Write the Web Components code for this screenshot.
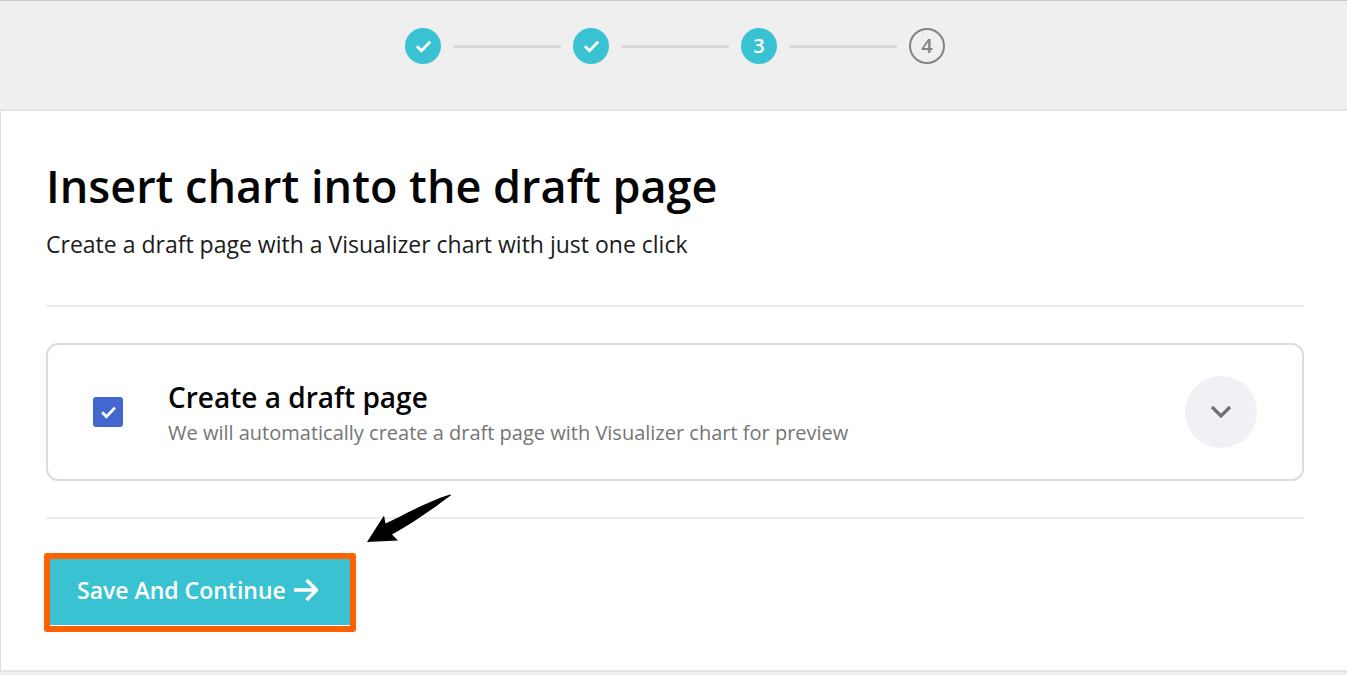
<!DOCTYPE html>
<html lang="en">
<head>
<meta charset="utf-8">
<meta name="viewport" content="width=device-width, initial-scale=1">
<title>Insert chart</title>
<style>
  body { margin: 0; background: #efefef; color: #050505; font-family: "Open Sans", "Noto Sans", sans-serif; }
</style>
</head>
<body>
<setup-wizard>
  <wizard-steps slot="steps" current="3" total="4"></wizard-steps>
  <wizard-heading>
    Insert chart into the draft page
    <span slot="lead">Create a draft page with a Visualizer chart with just one click</span>
  </wizard-heading>
  <option-card>
    Create a draft page
    <span slot="description">We will automatically create a draft page with Visualizer chart for preview</span>
  </option-card>
  <action-button slot="actions">Save And Continue</action-button>
</setup-wizard>

<script>
class BaseElement extends HTMLElement {
  connectedCallback() {
    if (this.shadowRoot) return;
    this.attachShadow({ mode: "open" }).innerHTML = this.render();
  }
}

customElements.define("setup-wizard", class extends BaseElement {
  render() {
    return `
      <style>
        :host { display: block; border-top: 1px solid #c8c8c8; }
        header { padding: 27px 0 45px 3px; }
        main { border: solid #dcdcdc; border-width: 2px 0 2px 1px; border-top-color: #e4e4e4; border-bottom-color: #e4e4e4; background: #fff; padding: 45px 43px 45px 45px; }
        .body { border: solid #ebebeb; border-width: 0 0 2px; padding-bottom: 36px; }
        footer { padding-top: 36px; }
      </style>
      <header><slot name="steps"></slot></header>
      <main>
        <div class="body"><slot></slot></div>
        <footer><slot name="actions"></slot></footer>
      </main>`;
  }
});

customElements.define("wizard-steps", class extends BaseElement {
  render() {
    const current = Number(this.getAttribute("current"));
    const total = Number(this.getAttribute("total"));
    const check = `<svg viewBox="0 0 36 36" role="img" aria-label="Done"><path d="M12 18.2 16.4 22.8 25.2 13.8"/></svg>`;
    let items = "";
    for (let n = 1; n <= total; n++) {
      const state = n > current ? "todo" : "on";
      items += `<li class="${state}"${n === current ? ' aria-current="step"' : ""}><span>${n < current ? check : n}</span></li>`;
    }
    return `
      <style>
        :host { display: block; }
        ol { display: flex; justify-content: center; gap: 12px; margin: 0; padding: 0; list-style: none; }
        li { display: flex; align-items: center; gap: 12px; }
        li:not(:last-child)::after { content: ""; width: 108px; height: 3px; background: #dadada; }
        span { box-sizing: border-box; display: grid; place-items: center; width: 36px; height: 36px; border-radius: 50%; font-size: 20px; line-height: 20px; font-weight: 600; }
        .on span { background: #39c3d2; color: #fff; }
        .todo span { border: 2px solid #828387; color: #828387; }
        svg { width: 36px; height: 36px; }
        path { fill: none; stroke: #fff; stroke-width: 2.8; }
      </style>
      <ol>${items}</ol>`;
  }
});

customElements.define("wizard-heading", class extends BaseElement {
  render() {
    return `
      <style>
        :host { display: block; border-bottom: 2px solid #ebebeb; padding-bottom: 43px; margin-bottom: 36px; }
        h1 { margin: 0; font-size: 45px; line-height: 60px; font-weight: 600; }
        p { margin: 10px 0 0; font-size: 23px; line-height: 36px; color: #1b1b1b; }
      </style>
      <h1><slot></slot></h1>
      <p><slot name="lead"></slot></p>`;
  }
});

customElements.define("option-card", class extends BaseElement {
  render() {
    return `
      <style>
        :host { display: flex; align-items: center; border: 2px solid #dcdcdc; border-radius: 12px; padding: 31px 45px; }
        .box { display: grid; margin-right: 45px; }
        .box > * { grid-area: 1 / 1; width: 30px; height: 30px; margin: 0; }
        input { appearance: none; border-radius: 3px; background: #4268cf; }
        input:not(:checked) + svg { visibility: hidden; }
        svg { pointer-events: none; fill: none; }
        .box path { stroke: #fff; stroke-width: 2.8; }
        label { flex: 1; }
        strong, small { display: block; }
        strong { font-size: 28px; line-height: 42px; font-weight: 600; }
        small { font-size: 20px; line-height: 30px; color: #757575; }
        button { display: grid; place-items: center; width: 72px; height: 72px; border: 0; border-radius: 50%; padding: 0; background: #f0f1f5; }
        button svg { width: 24px; height: 24px; }
        button path { stroke: #707070; stroke-width: 3.2; }
      </style>
      <span class="box">
        <input type="checkbox" id="choice" checked>
        <svg viewBox="0 0 30 30" aria-hidden="true"><path d="M9.2 15.2 13.4 19.6 22 10.6"/></svg>
      </span>
      <label for="choice"><strong><slot></slot></strong><small><slot name="description"></slot></small></label>
      <button type="button" aria-label="Show details"><svg viewBox="0 0 24 24" aria-hidden="true"><path d="M3 7 12 16 21 7"/></svg></button>`;
  }
});

customElements.define("action-button", class extends BaseElement {
  render() {
    return `
      <style>
        :host { display: inline-block; position: relative; vertical-align: top; }
        button { display: flex; align-items: center; gap: 8px; height: 70px; border: 0; padding: 0 36px 0 31px; background: #39c3d2; color: #fff; font: 600 23px/36px "Open Sans", "Noto Sans", sans-serif; white-space: nowrap; }
        button svg { width: 24px; height: 24px; fill: none; stroke: #fff; stroke-width: 3.4; }
        .frame { position: absolute; inset: -2px -2px -7px; border: 6px solid #ff6000; border-radius: 3px; pointer-events: none; }
        .pointer { position: absolute; left: 100%; top: -61px; margin-left: 12px; width: 86px; height: 50px; pointer-events: none; }
      </style>
      <button type="button"><slot></slot><svg viewBox="0 0 24 24" aria-hidden="true"><path d="M0 12H22M12.500 2 22.500 12 12.500 22"/></svg></button>
      <span class="frame"></span>
      <svg class="pointer" viewBox="0 0 86 50" aria-hidden="true"><path d="M1 48 18 21.500 19.500 29.500C38 21 60 8 84 0.500Q86 0.500 84 2C68 14 47 29 26 40.500L32 46.500Z"/></svg>`;
  }
});
</script>
</body>
</html>
